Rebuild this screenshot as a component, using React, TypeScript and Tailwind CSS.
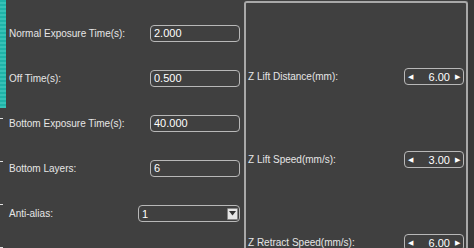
import type { ReactNode } from "react";

const font = { fontFamily: '"Liberation Sans", Arial, sans-serif' };

function TextBox({ value }: { value: string }) {
  return (
    <div className="h-[17px] w-[90px] rounded-[4px] border-[1.5px] border-[#b8b8b8] px-[3px] text-[11px] leading-[14px] text-white">
      {value}
    </div>
  );
}

function SpinBox({ value }: { value: string }) {
  return (
    <div className="flex h-[17px] w-[60px] items-center rounded-[4px] border-[1.5px] border-[#b8b8b8] px-[3px] text-[11px] text-white">
      <span className="text-[7px] leading-none">◀</span>
      <span className="flex-1 pr-[5px] text-right leading-[14px]">{value}</span>
      <span className="text-[7px] leading-none">▶</span>
    </div>
  );
}

function Select({ value }: { value: string }) {
  return (
    <div className="flex h-[17px] w-[102px] items-center rounded-[4px] border-[1.5px] border-[#b8b8b8] pl-[3px] pr-[1px] text-[11px] text-white">
      <span className="flex-1 leading-[14px]">{value}</span>
      <span className="flex h-[12px] w-[11px] items-center justify-center rounded-[1px] border border-[#888] bg-[#e6e6e6]">
        <svg width="7" height="5" viewBox="0 0 7 5">
          <path d="M0 0 H7 L3.5 4.5 Z" fill="#333" />
        </svg>
      </span>
    </div>
  );
}

function Row({ label, children }: { label: string; children: ReactNode }) {
  return (
    <div className="flex h-[17px] items-center justify-between">
      <span className="text-[10px] text-[#e6e6e6]">{label}</span>
      {children}
    </div>
  );
}

export default function App() {
  return (
    <div className="flex h-[248px] w-[474px] overflow-hidden bg-[#404040]" style={font}>
      <div className="flex w-[6px] flex-col">
        <div className="h-[108px] w-[6px] bg-[repeating-linear-gradient(180deg,#1fb3a8_0px,#1fb3a8_2px,#4fd0c6_3px,#1fb3a8_4px)]" />
        <div className="flex flex-col gap-[42px] pt-[10px]">
          <div className="h-[1px] w-[3px] bg-[#e0e0e0]" />
          <div className="h-[1px] w-[3px] bg-[#e0e0e0]" />
          <div className="h-[1px] w-[3px] bg-[#e0e0e0]" />
          <div className="h-[1px] w-[3px] bg-[#e0e0e0]" />
        </div>
      </div>

      <div className="flex w-[234px] flex-col gap-[28px] pl-[3px] pt-[25px]">
        <Row label="Normal Exposure Time(s):">
          <TextBox value="2.000" />
        </Row>
        <Row label="Off Time(s):">
          <TextBox value="0.500" />
        </Row>
        <Row label="Bottom Exposure Time(s):">
          <TextBox value="40.000" />
        </Row>
        <Row label="Bottom Layers:">
          <TextBox value="6" />
        </Row>
        <div className="flex h-[17px] items-center justify-between">
          <span className="text-[10px] text-[#e6e6e6]">Anti-alias:</span>
          <Select value="1" />
        </div>
      </div>

      <div className="ml-[4px] mt-[1px] h-[260px] w-[224px] rounded-tl-[3px] rounded-tr-[3px] border-l-[2px] border-r-[2px] border-t-[2px] border-[#a8a8a8]">
        <div className="flex flex-col gap-[66px] pl-[2px] pr-[2px] pt-[65px]">
          <Row label="Z Lift Distance(mm):">
            <SpinBox value="6.00" />
          </Row>
          <Row label="Z Lift Speed(mm/s):">
            <SpinBox value="3.00" />
          </Row>
          <Row label="Z Retract Speed(mm/s):">
            <SpinBox value="6.00" />
          </Row>
        </div>
      </div>
      <div className="flex-1 bg-[#383838]" />
    </div>
  );
}
